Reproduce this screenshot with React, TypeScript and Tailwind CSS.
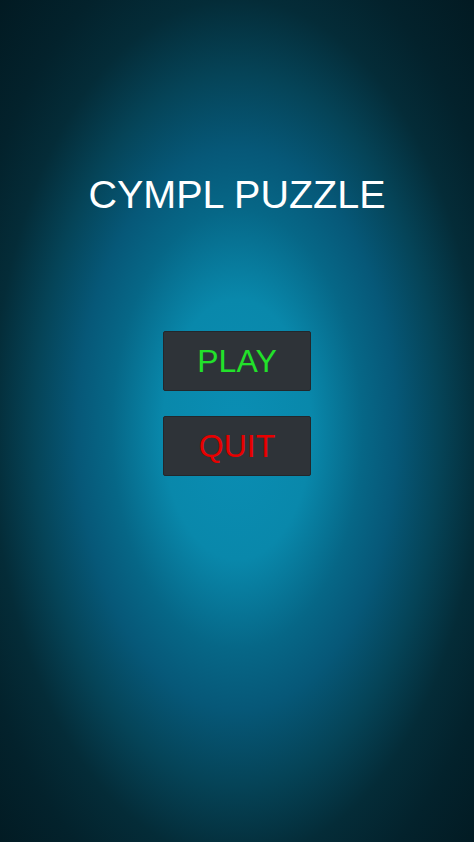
export default function App() {
  return (
    <div className="flex h-[842px] w-full flex-col items-center bg-[#021a22] bg-[radial-gradient(285px_500px_at_50%_51%,#0a8eb4_0%,#0988ab_26%,#066787_44%,#065878_56%,#054458_71%,#042c38_86%,#03222c_100%,#021a22_120%)] font-['Liberation_Sans',Arial,sans-serif]">
      <h1 className="mt-[175px] text-[39.5px] leading-none font-normal text-white">
        CYMPL PUZZLE
      </h1>

      <div className="mt-[116px] flex flex-col gap-[25px]">
        <button className="flex h-[60px] w-[148px] items-center justify-center rounded-[2px] border border-[#23272b] bg-[#2e3338] text-[32px] leading-none text-[#22e12a]">
          PLAY
        </button>
        <button className="flex h-[60px] w-[148px] items-center justify-center rounded-[2px] border border-[#23272b] bg-[#2e3338] text-[32px] leading-none text-[#e80000]">
          QUIT
        </button>
      </div>
    </div>
  );
}
